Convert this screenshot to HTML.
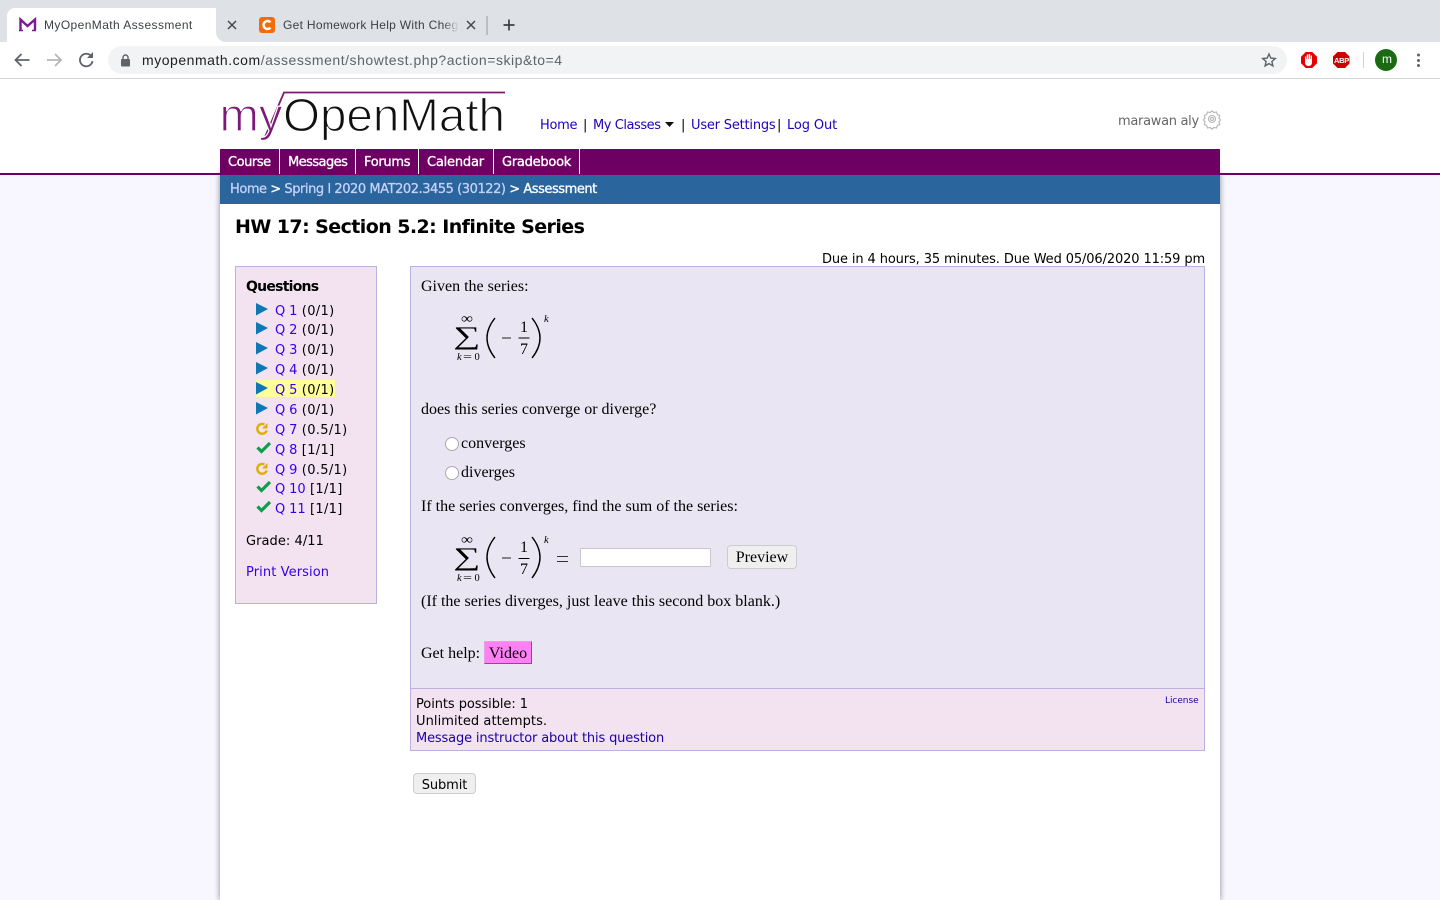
<!DOCTYPE html>
<html><head><meta charset="utf-8"><title>MyOpenMath Assessment</title>
<style>
html,body{margin:0;padding:0;width:1440px;height:900px;overflow:hidden;background:#f8f6ff}
*{box-sizing:border-box}
.b{position:absolute}
.t{position:absolute;white-space:nowrap;font-family:"DejaVu Sans",sans-serif;font-size:13px;line-height:16px;color:#000;letter-spacing:-.12px}
.s{position:absolute;white-space:nowrap;font-family:"Liberation Serif",serif;font-size:16px;line-height:18px;color:#000}
a{color:#3300ee;text-decoration:none}
a.t{color:#2200bb}
.c{position:absolute;white-space:nowrap;font-family:"Liberation Sans",sans-serif;color:#3c4043}
svg{position:absolute;overflow:visible}
a.w{color:#fff;font-size:13px;letter-spacing:-.3px;-webkit-text-stroke:.35px #fff}
.q{position:absolute;left:275px;white-space:nowrap;font-family:"DejaVu Sans",sans-serif;font-size:13px;line-height:16px;letter-spacing:.32px}
.q a{letter-spacing:-.1px}
</style></head><body>
<!-- browser chrome -->
<div class="b" style="left:0;top:0;width:1440px;height:42px;background:#dee1e6"></div>
<div class="b" style="left:7px;top:8px;width:241px;height:34px;background:#fff;border-radius:8px 8px 0 0"></div>
<div class="b" style="left:0;top:42px;width:1440px;height:37px;background:#fff;border-bottom:1px solid #d5d6da"></div>
<div class="b" style="left:108px;top:46px;width:1179px;height:28px;background:#f1f3f4;border-radius:14px"></div>
<svg style="left:0;top:0" width="1440" height="80">
<path d="M20.5 30V19.5L27.5 26L35 19.5V30" fill="none" stroke="#7a1a96" stroke-width="2.4"/>
<path d="M19 30.5h4M32 30.5h4" stroke="#7a1a96" stroke-width="1.4"/>
<rect x="259" y="17" width="16" height="16" rx="3" fill="#f26c0d"/>
<path d="M270.500 22.300a4 4 0 1 0 0 5.400" fill="none" stroke="#fff" stroke-width="2.400"/>
<path d="M467 21l8 8M475 21l-8 8" stroke="#45484c" stroke-width="1.500"/>
<path d="M487 16v19" stroke="#9a9ca0" stroke-width="1"/>
<path d="M503.500 25h11M509 19.500v11" stroke="#3c4043" stroke-width="1.700"/>
<path d="M29.500 60H15.500M21.500 54l-6 6 6 6" fill="none" stroke="#5f6368" stroke-width="1.800"/>
<path d="M47 60h14M55 54l6 6-6 6" fill="none" stroke="#b3b5b8" stroke-width="1.800"/>
<path d="M91.500 56.500a6.300 6.300 0 1 0 1 4.500" fill="none" stroke="#5f6368" stroke-width="1.800"/>
<path d="M93 52v6h-6z" fill="#5f6368"/>
<rect x="121" y="59" width="9" height="7.500" rx="1" fill="#5f6368"/>
<path d="M123 59.500v-2a2.500 2.500 0 0 1 5 0v2" fill="none" stroke="#5f6368" stroke-width="1.400"/>
<path d="M1269 54l1.800 4.100 4.500.400-3.400 3 1 4.400-3.900-2.300-3.900 2.300 1-4.400-3.400-3 4.500-.400z" fill="none" stroke="#5f6368" stroke-width="1.400"/>
<path d="M1305.700 52h6.600l4.700 4.700v6.600l-4.700 4.700h-6.600l-4.700-4.700v-6.600z" fill="#e60000"/>
<path d="M1305 60v-3.500h1.300V59h.5v-4.500h1.400V59h.5v-5h1.400v5h.5v-3.500h1.400V62q0 4-3.500 4-2.500 0-3.500-2.500z" fill="#fff"/>
<path d="M1337.500 52h7.500l4.500 4.500v7l-4.500 4.500h-7.500l-4.500-4.500v-7z" fill="#c80000"/>
<path d="M1363.500 52v16" stroke="#cfd0d2" stroke-width="1"/>
<circle cx="1386" cy="60" r="11" fill="#1a6b12"/>
<circle cx="1418.500" cy="55" r="1.500" fill="#5f6368"/><circle cx="1418.500" cy="60.500" r="1.500" fill="#5f6368"/><circle cx="1418.500" cy="65.500" r="1.500" fill="#5f6368"/>
</svg>
<div class="b" style="left:216px;top:8px;width:32px;height:34px;background:#dee1e6;border-radius:0 0 0 10px"></div>
<svg style="left:0;top:0" width="300" height="40"><path d="M228 21l8 8M236 21l-8 8" stroke="#45484c" stroke-width="1.5"/></svg>
<div class="c" style="left:44px;top:17px;font-size:12px;line-height:16px;letter-spacing:.41px">MyOpenMath Assessment</div>
<div class="c" style="left:283px;top:17px;width:176px;overflow:hidden;font-size:12px;line-height:16px;letter-spacing:.3px;-webkit-mask-image:linear-gradient(90deg,#000 160px,transparent)">Get Homework Help With Chegg</div>
<div class="c" style="left:142px;top:52px;font-size:14px;line-height:16px;letter-spacing:.53px;color:#5f6368"><span style="color:#202124">myopenmath.com</span>/assessment/showtest.php?action=skip&amp;to=4</div>
<div class="c" style="left:1334px;top:56px;font-size:7.500px;line-height:9px;font-weight:bold;color:#fff;letter-spacing:-.3px">ABP</div>
<div class="c" style="left:1382px;top:52px;font-size:12px;line-height:15px;color:#fff">m</div>

<!-- page -->
<div class="b" style="left:0;top:79px;width:1440px;height:94px;background:#fff"></div>
<div class="b" style="left:220px;top:173px;width:1000px;height:727px;background:#fff;box-shadow:0 0 6px rgba(0,0,0,.45)"></div>
<div class="b" style="left:0;top:173px;width:1440px;height:2px;background:#6d0062"></div>

<svg style="left:0;top:0" width="1440" height="200">
<path d="M505 92.500H284L265 137" fill="none" stroke="#7c1a78" stroke-width="1.800"/>
<text x="219.500" y="131" font-family="'Liberation Sans',sans-serif" font-size="46" textLength="63" lengthAdjust="spacingAndGlyphs" fill="#7c1a78" stroke="#fff" stroke-width="1.200">my</text>
<text x="283" y="131" font-family="'Liberation Sans',sans-serif" font-size="46" textLength="222" lengthAdjust="spacingAndGlyphs" fill="#111" stroke="#fff" stroke-width="1.200">OpenMath</text>
<g fill="none" stroke="#b4b4b4" stroke-width="1.100"><path d="M1212 112l2 1.500 2.500-.500.800 2.500 2.400 1-.700 2.500 1.500 2-1.500 2 .700 2.500-2.400 1-.800 2.500-2.500-.500-2 1.500-2-1.500-2.500.500-.800-2.500-2.400-1 .700-2.500-1.500-2 1.500-2-.700-2.500 2.400-1 .800-2.500 2.500.500z" transform="translate(0,-1)"/><circle cx="1212" cy="119" r="3.500"/><circle cx="1212" cy="119" r="1.500"/></g>
<path d="M665 122h9l-4.500 5z" fill="#111"/>
</svg>
<a class="t" style="left:540px;top:118px;letter-spacing:-.3px">Home</a><span class="t" style="left:583px;top:118px">|</span>
<a class="t" style="left:593px;top:118px;letter-spacing:-.45px">My Classes</a><span class="t" style="left:681px;top:118px">|</span>
<a class="t" style="left:691px;top:118px;letter-spacing:-.2px">User Settings</a><span class="t" style="left:777px;top:118px">|</span>
<a class="t" style="left:787px;top:118px">Log Out</a>
<div class="t" style="left:1118px;top:114px;color:#666;letter-spacing:-.3px">marawan aly</div>

<!-- nav -->
<div class="b" style="left:220px;top:149px;width:1000px;height:25px;background:#6d0062"></div>
<div class="b" style="left:279px;top:149px;width:1px;height:25px;background:#fff"></div>
<div class="b" style="left:355px;top:149px;width:1px;height:25px;background:#fff"></div>
<div class="b" style="left:418px;top:149px;width:1px;height:25px;background:#fff"></div>
<div class="b" style="left:493px;top:149px;width:1px;height:25px;background:#fff"></div>
<div class="b" style="left:579px;top:149px;width:1px;height:25px;background:#fff"></div>
<a class="t w" style="left:228px;top:153px;margin-top:2px;letter-spacing:-.45px">Course</a>
<a class="t w" style="left:288px;top:153px;margin-top:2px;letter-spacing:-.55px">Messages</a>
<a class="t w" style="left:364px;top:153px;margin-top:2px">Forums</a>
<a class="t w" style="left:427px;top:153px;margin-top:2px;letter-spacing:-.2px">Calendar</a>
<a class="t w" style="left:502px;top:153px;margin-top:2px;letter-spacing:-.25px">Gradebook</a>
<!-- breadcrumb -->
<div class="b" style="left:220px;top:175px;width:1000px;height:29px;background:#2a659e"></div>
<div class="t" style="left:230px;top:180px;margin-top:2px;color:#fff;letter-spacing:-.45px;-webkit-text-stroke:.3px"><span style="color:#c5d2f5">Home</span> &gt; <span style="color:#c5d2f5">Spring I 2020 MAT202.3455 (30122)</span> &gt; Assessment</div>

<h1 class="t" style="left:235px;top:215px;margin:0;font-size:19px;line-height:25px;font-weight:bold;letter-spacing:-.57px">HW 17: Section 5.2: Infinite Series</h1>
<div class="t" style="right:235px;top:252px">Due in 4 hours, 35 minutes. Due Wed 05/06/2020 11:59 pm</div>

<!-- sidebar -->
<div class="b" style="left:235px;top:266px;width:142px;height:338px;background:#f3e3f1;border:1px solid #b8b2e0"></div>
<div class="t" style="left:246px;top:279px;font-size:14px;font-weight:bold;letter-spacing:-.75px">Questions</div>
<div class="b" style="left:256px;top:380px;width:79px;height:17px;background:#ffff99"></div>
<svg style="left:0;top:0" width="400" height="520">
<path d="M256 303l12 6-12 6.500zM256 322l12 6-12 6.500zM256 342l12 6-12 6.500zM256 362l12 6-12 6.500zM256 382l12 6-12 6.500zM256 402l12 6-12 6.500z" fill="#0e78b6"/>
<g fill="none" stroke="#dcae0c" stroke-width="2.400"><path d="M264.500 424.500a4.900 4.900 0 1 0 2.300 6"/><path d="M264.500 464.500a4.900 4.900 0 1 0 2.300 6"/></g>
<path d="M267.500 423v5.500h-5.500zM267.500 463v5.500h-5.500z" fill="#dcae0c"/>
<g fill="none" stroke="#0e9f4a" stroke-width="3.200"><path d="M257.500 447.500l4 4 8.500-8.500"/><path d="M257.500 486.500l4 4 8.500-8.500"/><path d="M257.500 506.500l4 4 8.500-8.500"/></g>
</svg>
<div class="q" style="top:304px"><a>Q 1</a> (0/1)</div>
<div class="q" style="top:323px"><a>Q 2</a> (0/1)</div>
<div class="q" style="top:343px"><a>Q 3</a> (0/1)</div>
<div class="q" style="top:363px"><a>Q 4</a> (0/1)</div>
<div class="q" style="top:383px"><a>Q 5</a> (0/1)</div>
<div class="q" style="top:403px"><a>Q 6</a> (0/1)</div>
<div class="q" style="top:423px"><a>Q 7</a> (0.5/1)</div>
<div class="q" style="top:443px"><a>Q 8</a> [1/1]</div>
<div class="q" style="top:463px"><a>Q 9</a> (0.5/1)</div>
<div class="q" style="top:482px"><a>Q 10</a> [1/1]</div>
<div class="q" style="top:502px"><a>Q 11</a> [1/1]</div>
<div class="t" style="left:246px;top:534px;letter-spacing:.05px">Grade: 4/11</div>
<a class="t" style="left:246px;top:565px;color:#3300ee;letter-spacing:.1px">Print Version</a>

<!-- question -->
<div class="b" style="left:410px;top:266px;width:795px;height:423px;background:#e9e5f3;border:1px solid #b8b2e0;border-bottom:0"></div>
<div class="b" style="left:410px;top:688px;width:795px;height:63px;background:#f3e3f1;border:1px solid #b8b2e0"></div>
<div class="s" style="left:421px;top:278px">Given the series:</div>
<svg style="left:0;top:0" width="900" height="620" font-family="'Liberation Serif',serif" fill="#000">
<g>
<text x="461" y="323" font-size="14" textLength="12" lengthAdjust="spacingAndGlyphs">∞</text>
<text transform="translate(453.500,344) scale(1.220,.82)" font-size="31">∑</text>
<text x="457" y="360" font-size="10.500" font-style="italic">k</text><text x="463" y="360" font-size="10.500" textLength="9" lengthAdjust="spacingAndGlyphs">=</text><text x="474.500" y="360" font-size="10.500">0</text>
<path d="M495 318q-16 20 0 40" fill="none" stroke="#000" stroke-width="1.400"/>
<path d="M532 318q16 20 0 40" fill="none" stroke="#000" stroke-width="1.400"/>
<path d="M502 338h9" stroke="#333" stroke-width="1.100"/>
<text x="520" y="332" font-size="16">1</text><path d="M518.500 338h11" stroke="#000" stroke-width="1"/><text x="520" y="354" font-size="16">7</text>
<text x="544" y="322" font-size="10.500" font-style="italic">k</text>
</g>
<g>
<text x="461" y="544" font-size="14" textLength="12" lengthAdjust="spacingAndGlyphs">∞</text>
<text transform="translate(453.500,565) scale(1.220,.82)" font-size="31">∑</text>
<text x="457" y="581" font-size="10.500" font-style="italic">k</text><text x="463" y="581" font-size="10.500" textLength="9" lengthAdjust="spacingAndGlyphs">=</text><text x="474.500" y="581" font-size="10.500">0</text>
<path d="M495 537q-16 20 0 41" fill="none" stroke="#000" stroke-width="1.400"/>
<path d="M532 537q16 20 0 41" fill="none" stroke="#000" stroke-width="1.400"/>
<path d="M502 558h9" stroke="#333" stroke-width="1.100"/>
<text x="520" y="552" font-size="16">1</text><path d="M518.500 558.500h11" stroke="#000" stroke-width="1"/><text x="520" y="574" font-size="16">7</text>
<text x="544" y="543" font-size="10.500" font-style="italic">k</text>
<path d="M557 556.500h11M557 561.500h11" stroke="#333" stroke-width="1"/>
</g>
</svg>
<div class="s" style="left:421px;top:401px">does this series converge or diverge?</div>
<div class="b" style="left:445px;top:437px;width:14px;height:14px;border-radius:50%;background:#fff;border:1px solid #aaa"></div>
<div class="s" style="left:461px;top:435px">converges</div>
<div class="b" style="left:445px;top:466px;width:14px;height:14px;border-radius:50%;background:#fff;border:1px solid #aaa"></div>
<div class="s" style="left:461px;top:464px">diverges</div>
<div class="s" style="left:421px;top:498px">If the series converges, find the sum of the series:</div>
<input class="b" style="left:580px;top:548px;width:131px;height:19px;background:#fff;border:1px solid #c8c8c8;padding:0;border-radius:0" type="text">
<div class="b s" style="left:727px;top:545px;width:70px;height:24px;background:#efefef;border:1px solid #ccc;border-radius:4px;text-align:center;line-height:24px">Preview</div>
<div class="s" style="left:421px;top:593px">(If the series diverges, just leave this second box blank.)</div>
<div class="s" style="left:421px;top:645px">Get help:</div>
<div class="b s" style="left:484px;top:641px;width:48px;height:23px;background:#ff80f5;border:1px solid;border-color:#e8a0e0 #a04098 #a04098 #e8a0e0;text-align:center;line-height:23px">Video</div>

<div class="t" style="left:416px;top:697px;letter-spacing:-.07px">Points possible: 1</div>
<div class="t" style="left:416px;top:714px;letter-spacing:.07px">Unlimited attempts.</div>
<a class="t" style="left:416px;top:731px;color:#1a00aa;letter-spacing:-.15px">Message instructor about this question</a>
<a class="t" style="left:1165px;top:695px;font-size:9px;line-height:12px;letter-spacing:-.05px;color:#1a00aa">License</a>
<div class="b t" style="left:413px;top:773px;width:63px;height:21px;background:#efefef;border:1px solid #ccc;border-radius:4px;text-align:center;line-height:23px">Submit</div>
</body></html>
